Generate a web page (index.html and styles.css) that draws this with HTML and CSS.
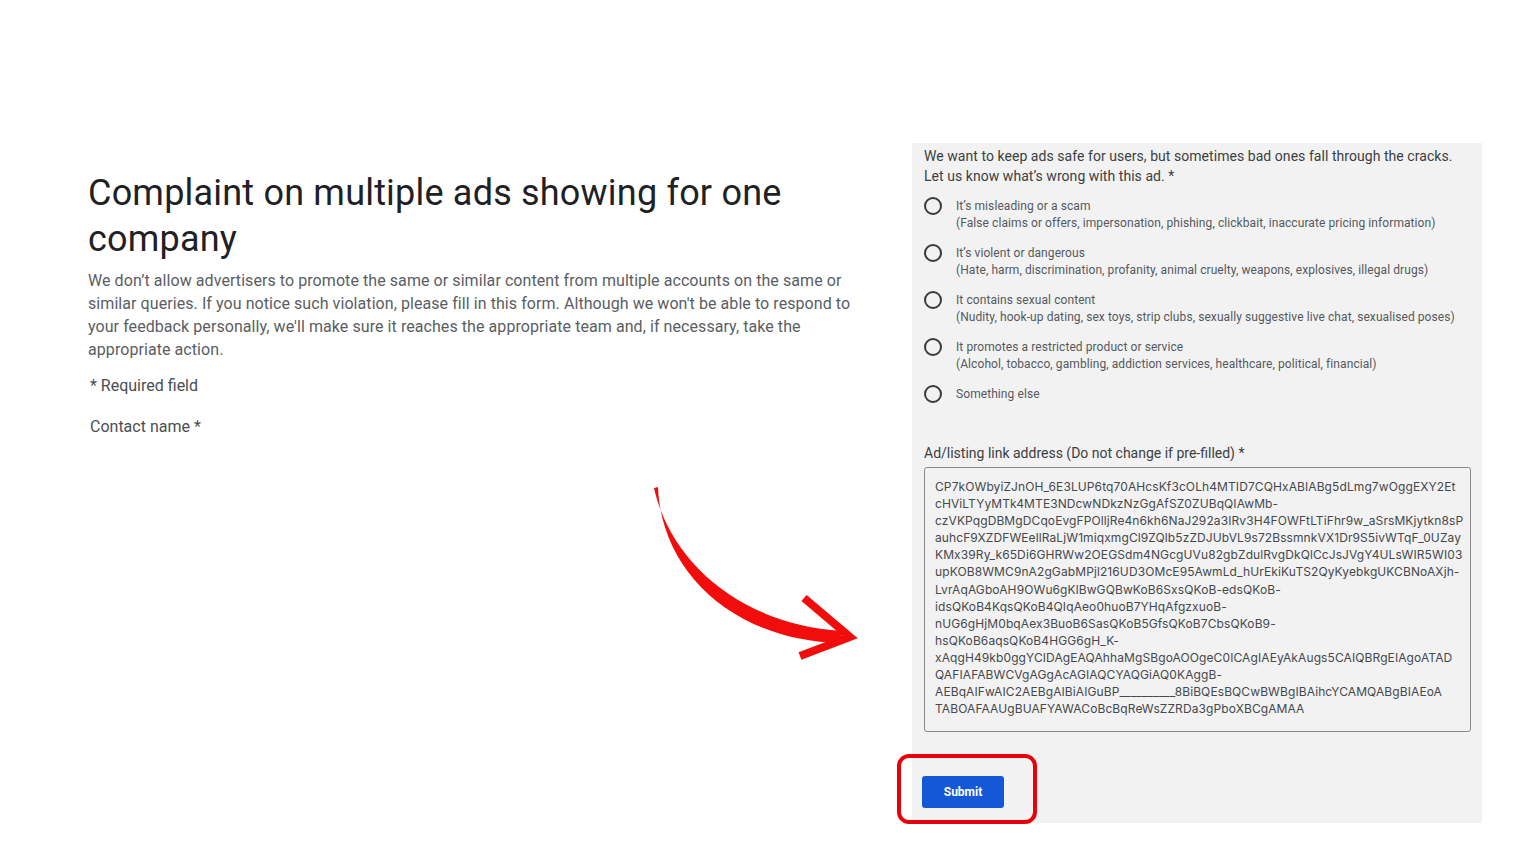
FILE: index.html
```html
<!DOCTYPE html>
<html lang="en">
<head>
<meta charset="utf-8">
<title>Complaint on multiple ads showing for one company</title>
<link rel="stylesheet" href="styles.css">
</head>
<body>
<div class="page">
  <section class="intro">
    <h1 class="title">Complaint on multiple ads showing for one company</h1>
    <p class="lead">We don’t allow advertisers to promote the same or similar content from multiple accounts on the same or similar queries. If you notice such violation, please fill in this form. Although we won't be able to respond to your feedback personally, we'll make sure it reaches the appropriate team and, if necessary, take the appropriate action.</p>
    <p class="required">* Required field</p>
    <p class="field-label">Contact name *</p>
  </section>

  <section class="panel">
    <p class="question">We want to keep ads safe for users, but sometimes bad ones fall through the cracks.<br>Let us know what’s wrong with this ad. *</p>
    <ul class="options">
      <li class="option"><span class="radio"></span><span class="opt-text">It’s misleading or a scam<br>(False claims or offers, impersonation, phishing, clickbait, inaccurate pricing information)</span></li>
      <li class="option"><span class="radio"></span><span class="opt-text">It’s violent or dangerous<br>(Hate, harm, discrimination, profanity, animal cruelty, weapons, explosives, illegal drugs)</span></li>
      <li class="option"><span class="radio"></span><span class="opt-text">It contains sexual content<br>(Nudity, hook-up dating, sex toys, strip clubs, sexually suggestive live chat, sexualised poses)</span></li>
      <li class="option"><span class="radio"></span><span class="opt-text">It promotes a restricted product or service<br>(Alcohol, tobacco, gambling, addiction services, healthcare, political, financial)</span></li>
      <li class="option"><span class="radio"></span><span class="opt-text">Something else</span></li>
    </ul>
    <p class="link-label">Ad/listing link address (Do not change if pre-filled) *</p>
    <div class="link-box">CP7kOWbyiZJnOH_6E3LUP6tq70AHcsKf3cOLh4MTID7CQHxABIABg5dLmg7wOggEXY2Et
cHViLTYyMTk4MTE3NDcwNDkzNzGgAfSZ0ZUBqQIAwMb-
czVKPqgDBMgDCqoEvgFPOlljRe4n6kh6NaJ292a3IRv3H4FOWFtLTiFhr9w_aSrsMKjytkn8sP
auhcF9XZDFWEellRaLjW1miqxmgCl9ZQlb5zZDJUbVL9s72BssmnkVX1Dr9S5ivWTqF_0UZay
KMx39Ry_k65Di6GHRWw2OEGSdm4NGcgUVu82gbZdulRvgDkQlCcJsJVgY4ULsWIR5WI03
upKOB8WMC9nA2gGabMPjl216UD3OMcE95AwmLd_hUrEkiKuTS2QyKyebkgUKCBNoAXjh-
LvrAqAGboAH9OWu6gKlBwGQBwKoB6SxsQKoB-edsQKoB-
idsQKoB4KqsQKoB4QIqAeo0huoB7YHqAfgzxuoB-
nUG6gHjM0bqAex3BuoB6SasQKoB5GfsQKoB7CbsQKoB9-
hsQKoB6aqsQKoB4HGG6gH_K-
xAqgH49kb0ggYCIDAgEAQAhhaMgSBgoAOOgeC0ICAgIAEyAkAugs5CAIQBRgEIAgoATAD
QAFIAFABWCVgAGgAcAGIAQCYAQGiAQ0KAggB-
AEBqAIFwAIC2AEBgAIBiAIGuBP__________8BiBQEsBQCwBWBgIBAihcYCAMQABgBIAEoA
TABOAFAAUgBUAFYAWACoBcBqReWsZZRDa3gPboXBCgAMAA</div>
    <div class="submit-row">
      <button class="submit" type="button">Submit</button>
      <span class="highlight"></span>
    </div>
  </section>

  <svg class="arrow" width="220" height="190" viewBox="640 470 220 190" aria-hidden="true">
    <path d="M654,488 C670,560 738,624 842,631 L841,643 C734,641 661,572 658,487 Z" fill="#f20d0d"/>
    <polyline points="804,598 850,637 800,656" fill="none" stroke="#f20d0d" stroke-width="8" stroke-linejoin="miter" stroke-linecap="butt"/>
  </svg>
</div>
</body>
</html>
```

FILE: styles.css
```css
* { box-sizing: border-box; }

html, body {
  margin: 0;
  padding: 0;
  background: #ffffff;
}

body {
  font-family: Roboto, "Liberation Sans", Arial, sans-serif;
  color: #3c4043;
}

.page {
  position: relative;
  width: 1536px;
  height: 864px;
  display: flex;
  align-items: flex-start;
  padding-top: 143px;
}

.intro {
  width: 824px;
  margin-left: 88px;
  padding-top: 27px;
}

.title {
  margin: 0;
  width: 768px;
  font-size: 36px;
  line-height: 46px;
  font-weight: 400;
  color: #202124;
  letter-spacing: 0.2px;
}

.lead {
  margin: 7px 0 0;
  width: 772px;
  font-size: 16px;
  line-height: 23px;
  color: #5a5e63;
  letter-spacing: 0.07px;
}

.required {
  margin: 13px 0 0 2px;
  font-size: 16px;
  line-height: 23px;
  color: #4a4e52;
}

.field-label {
  margin: 18px 0 0 2px;
  font-size: 16px;
  line-height: 23px;
  color: #4a4e52;
}

.panel {
  width: 570px;
  height: 680px;
  background: #f2f2f2;
  padding: 3px 12px 0;
  display: flex;
  flex-direction: column;
}

.question {
  margin: 0;
  font-size: 14px;
  line-height: 20px;
  color: #3c4043;
  letter-spacing: 0.05px;
}

.options {
  list-style: none;
  margin: 12px 0 0;
  padding: 0;
  display: flex;
  flex-direction: column;
  gap: 13px;
}

.option {
  display: flex;
  align-items: flex-start;
  gap: 15px;
}

.radio {
  flex: none;
  width: 18px;
  height: 18px;
  margin-top: -1px;
  border: 2px solid #3a3a3a;
  border-radius: 50%;
}

.opt-text {
  font-size: 12px;
  line-height: 17px;
  color: #55595e;
  letter-spacing: 0.08px;
  margin-left: -1px;
}

.link-label {
  margin: 40px 0 0;
  font-size: 14px;
  line-height: 20px;
  color: #3c4043;
}

.link-box {
  margin-top: 4px;
  width: 547px;
  height: 265px;
  border: 1px solid #8a8a8a;
  border-radius: 3px;
  padding: 10px 10px 0;
  font-family: Inter, Roboto, "Liberation Sans", sans-serif;
  font-size: 12px;
  line-height: 17.1px;
  color: #45484c;
  white-space: pre-line;
  letter-spacing: 0.1px;
}

.submit-row {
  position: relative;
  margin-top: 44px;
  margin-left: -2px;
  width: 82px;
}

.submit {
  display: block;
  width: 82px;
  height: 32px;
  border: none;
  border-radius: 3px;
  background: #1558d6;
  color: #ffffff;
  font-family: Roboto, "Liberation Sans", Arial, sans-serif;
  font-size: 12px;
  font-weight: 700;
  cursor: pointer;
}

.highlight {
  position: absolute;
  left: -25px;
  top: -22px;
  width: 140px;
  height: 70px;
  border: 4px solid #e8000b;
  border-radius: 12px;
  pointer-events: none;
}

.arrow {
  position: absolute;
  left: 640px;
  top: 470px;
}
```
